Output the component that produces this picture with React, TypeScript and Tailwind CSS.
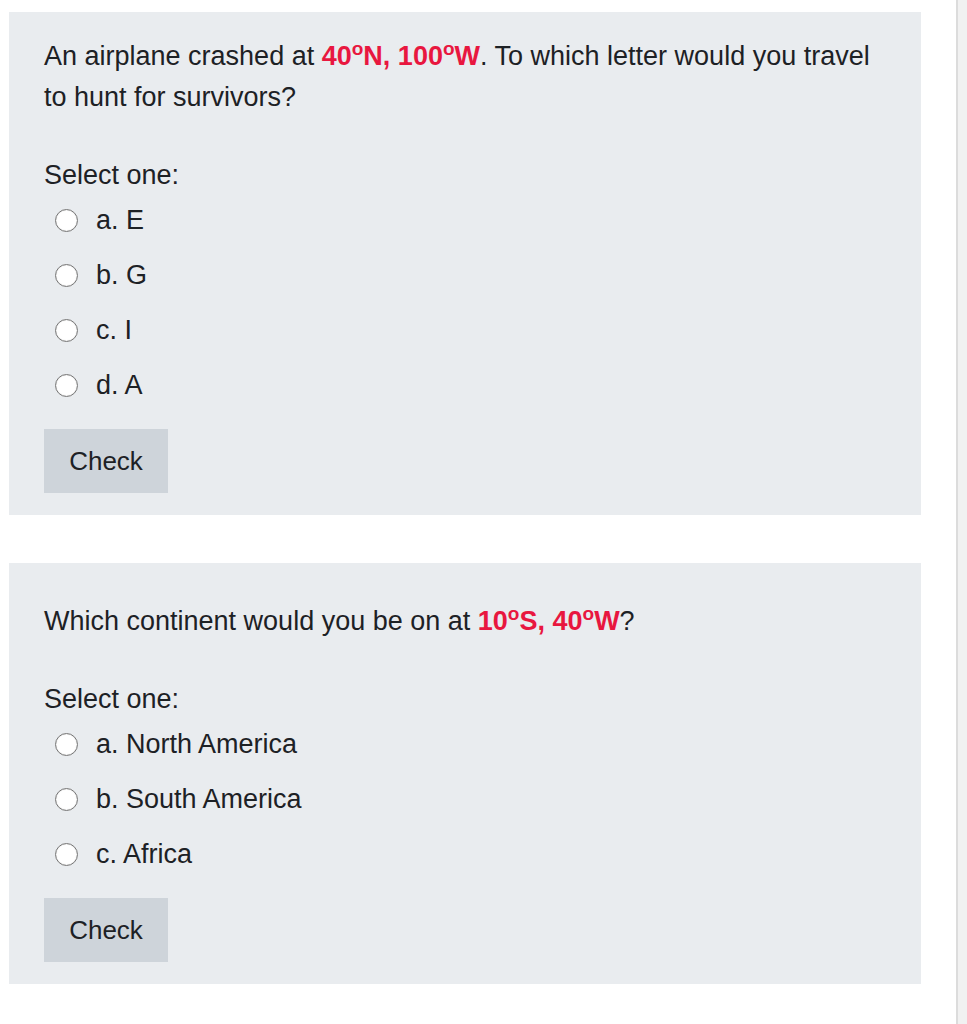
import React from "react";

function Coord({ parts }: { parts: [string, string][] }) {
  return (
    <span className="font-bold text-[#e8173f]">
      {parts.map(([num, dir], i) => (
        <React.Fragment key={i}>
          {i > 0 ? ", " : ""}
          {num}
          <span className="inline-block text-[19px] align-top leading-none mt-[3px]">o</span>
          {dir}
        </React.Fragment>
      ))}
    </span>
  );
}

function Option({ label }: { label: string }) {
  return (
    <div className="flex items-center h-[55px]">
      <span className="ml-[11px] w-[23px] h-[23px] rounded-full border-[1.5px] border-[#767676] bg-white shrink-0 shadow-[inset_0_0_1px_rgba(0,0,0,0.3)]" />
      <span className="ml-[18px]">{label}</span>
    </div>
  );
}

function Question({
  children,
  options,
  topPad,
}: {
  children: React.ReactNode;
  options: string[];
  topPad: string;
}) {
  return (
    <div className={`bg-[#e9ecef] w-[912px] pl-[35px] pr-[35px] pb-[22px] ${topPad}`}>
      <div className="leading-[41px] pr-[10px]">{children}</div>
      <div className="mt-[37px] leading-[41px]">Select one:</div>
      <div className="mt-[-3px]">
        {options.map((o) => (
          <Option key={o} label={o} />
        ))}
      </div>
      <button className="mt-[16px] bg-[#ced4da] h-[64px] w-[124px] text-[#1d2125] text-[26px]">
        Check
      </button>
    </div>
  );
}

export default function App() {
  return (
    <div
      className="flex w-[967px] min-h-[1024px] bg-white text-[#1d2125] text-[27px]"
      style={{ fontFamily: '"Liberation Sans", Arial, Helvetica, sans-serif' }}
    >
      <div className="flex-1 pl-[9px] pt-[12px] flex flex-col gap-[48px]">
        <Question topPad="pt-[24px]" options={["a. E", "b. G", "c. I", "d. A"]}>
          An airplane crashed at <Coord parts={[["40", "N"], ["100", "W"]]} />. To which letter would
          you travel to hunt for survivors?
        </Question>
        <Question topPad="pt-[38px]" options={["a. North America", "b. South America", "c. Africa"]}>
          Which continent would you be on at <Coord parts={[["10", "S"], ["40", "W"]]} />?
        </Question>
      </div>
      <div className="w-[11px] shrink-0 bg-[#f1f1f1] border-l-2 border-[#dcdcdc]" />
    </div>
  );
}
